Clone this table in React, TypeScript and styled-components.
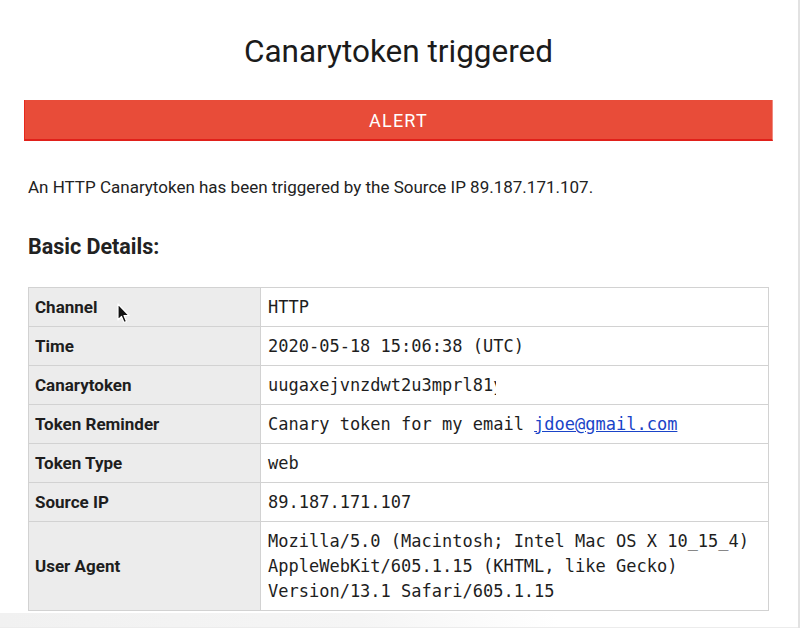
import React from "react";
import styled, { createGlobalStyle } from "styled-components";

const GlobalStyle = createGlobalStyle`
  html, body { margin: 0; padding: 0; background: #ffffff; }
  body { font-family: Roboto, "Noto Sans", "Liberation Sans", sans-serif; color: #222; }
  * { box-sizing: border-box; }
`;

const Page = styled.div`
  position: relative;
  width: 800px;
  height: 628px;
  overflow: hidden;
  border-right: 2px solid #e2e2e2;
  display: flex;
  flex-direction: column;
`;

const Main = styled.main`
  flex: 1;
  padding: 33px 25px 0 24px;
  display: flex;
  flex-direction: column;
`;

const Title = styled.h1`
  margin: 0 0 29px;
  font-size: 31.5px;
  line-height: 38px;
  font-weight: 400;
  text-align: center;
  color: #1b1b1b;
`;

const AlertBar = styled.div`
  height: 41px;
  background: #e84c39;
  border-left: 1px solid #e8281c;
  border-right: 1px solid #f08a80;
  border-bottom: 2px solid #e0201a;
  color: #fff;
  font-size: 18px;
  letter-spacing: 1.2px;
  text-transform: uppercase;
  display: flex;
  align-items: center;
  justify-content: center;
  padding-top: 1px;
`;

const Content = styled.section`
  padding: 0 4px;
  display: flex;
  flex-direction: column;
`;

const Intro = styled.p`
  margin: 34px 0 0;
  font-size: 17px;
  line-height: 24px;
  color: #222;
`;

const SectionTitle = styled.h2`
  margin: 34px 0 26px;
  font-size: 21.5px;
  line-height: 28px;
  font-weight: 700;
  color: #222;
`;

const Table = styled.table`
  width: 741px;
  border-collapse: collapse;
  border: 1px solid #cfcfcf;
`;

const Label = styled.th`
  width: 232px;
  background: #ececec;
  border: 1px solid #d2d2d2;
  text-align: left;
  vertical-align: middle;
  padding: 6.5px 6px;
  font-size: 17px;
  line-height: 25px;
  font-weight: 700;
  color: #1e1e1e;
`;

const Value = styled.td`
  border: 1px solid #d2d2d2;
  padding: 6.5px 7px;
  font-family: "DejaVu Sans Mono", "Liberation Mono", monospace;
  font-size: 17px;
  line-height: 25px;
  color: #1e1e1e;
  vertical-align: middle;
`;

const Link = styled.a`
  color: #1a44c8;
  text-decoration: underline;
`;

const Clipped = styled.span`
  display: inline-block;
  width: 3px;
  overflow: hidden;
  vertical-align: bottom;
`;

const Footer = styled.div`
  height: 16px;
  margin-top: 2px;
  background: linear-gradient(to right, #f1f1f1 0%, #f5f5f5 45%, #ffffff 70%);
  border-bottom: 1px solid #ececec;
`;

const Cursor = styled.svg`
  position: absolute;
  left: 114px;
  top: 302px;
  width: 16px;
  height: 24px;
`;

const rows: { label: string; value: React.ReactNode }[] = [
  { label: "Channel", value: "HTTP" },
  { label: "Time", value: "2020-05-18 15:06:38 (UTC)" },
  {
    label: "Canarytoken",
    value: (
      <>
        uugaxejvnzdwt2u3mprl81<Clipped>y</Clipped>
      </>
    ),
  },
  {
    label: "Token Reminder",
    value: (
      <>
        Canary token for my email <Link href="#">jdoe@gmail.com</Link>
      </>
    ),
  },
  { label: "Token Type", value: "web" },
  { label: "Source IP", value: "89.187.171.107" },
  {
    label: "User Agent",
    value: (
      <>
        Mozilla/5.0 (Macintosh; Intel Mac OS X 10_15_4)
        <br />
        AppleWebKit/605.1.15 (KHTML, like Gecko)
        <br />
        Version/13.1 Safari/605.1.15
      </>
    ),
  },
];

export default function App() {
  return (
    <>
      <GlobalStyle />
      <Page>
        <Main>
          <Title>Canarytoken triggered</Title>
          <AlertBar>Alert</AlertBar>
          <Content>
            <Intro>
              An HTTP Canarytoken has been triggered by the Source IP 89.187.171.107.
            </Intro>
            <SectionTitle>Basic Details:</SectionTitle>
            <Table>
              <tbody>
                {rows.map((r) => (
                  <tr key={r.label}>
                    <Label>{r.label}</Label>
                    <Value>{r.value}</Value>
                  </tr>
                ))}
              </tbody>
            </Table>
          </Content>
        </Main>
        <Footer />
        <Cursor viewBox="0 0 16 24">
          <path
            d="M4 2 L4 18 L7.5 14.5 L10 20.5 L12.5 19.5 L10 13.5 L15 13.5 Z"
            fill="#111"
            stroke="#fff"
            strokeWidth="1.2"
            strokeLinejoin="round"
          />
        </Cursor>
      </Page>
    </>
  );
}
